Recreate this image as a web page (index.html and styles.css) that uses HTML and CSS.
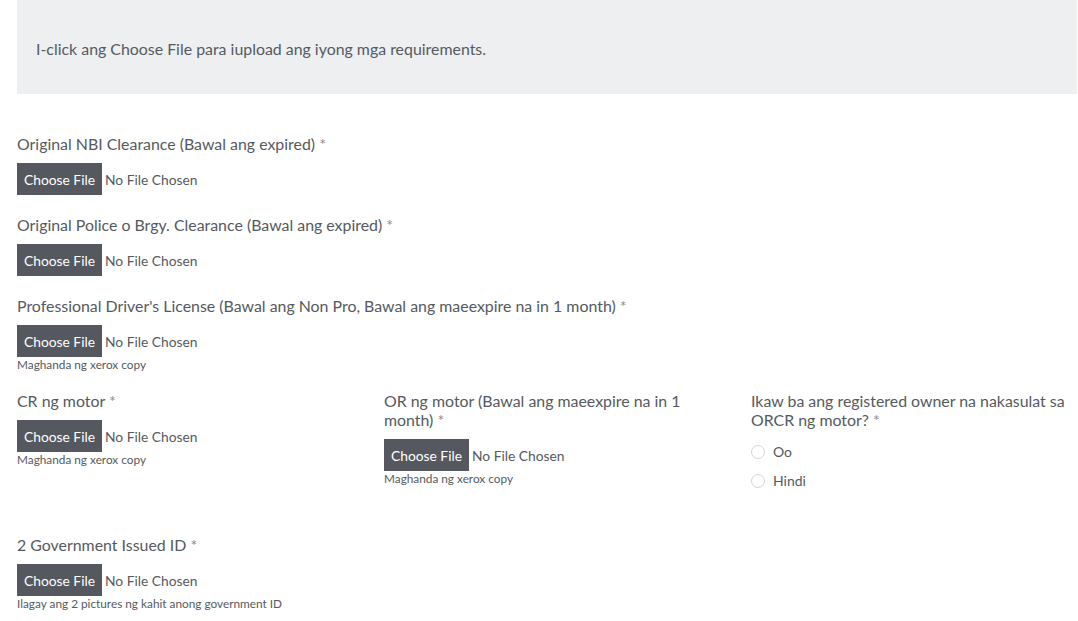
FILE: index.html
```html
<!DOCTYPE html>
<html lang="tl">
<head>
<meta charset="utf-8">
<title>Requirements</title>
<link rel="stylesheet" href="styles.css">
</head>
<body>
<div class="page">
  <div class="notice">I-click ang Choose File para iupload ang iyong mga requirements.</div>

  <div class="fields">
    <div class="field">
      <label class="label">Original NBI Clearance (Bawal ang expired) <span class="req">*</span></label>
      <div class="file"><span class="btn">Choose File</span><span class="none">No File Chosen</span></div>
    </div>

    <div class="field">
      <label class="label">Original Police o Brgy. Clearance (Bawal ang expired) <span class="req">*</span></label>
      <div class="file"><span class="btn">Choose File</span><span class="none">No File Chosen</span></div>
    </div>

    <div class="field with-help">
      <label class="label">Professional Driver's License (Bawal ang Non Pro, Bawal ang maeexpire na in 1 month) <span class="req">*</span></label>
      <div class="file"><span class="btn">Choose File</span><span class="none">No File Chosen</span></div>
      <div class="help">Maghanda ng xerox copy</div>
    </div>

    <div class="cols">
      <div class="field">
        <label class="label">CR ng motor <span class="req">*</span></label>
        <div class="file"><span class="btn">Choose File</span><span class="none">No File Chosen</span></div>
        <div class="help">Maghanda ng xerox copy</div>
      </div>
      <div class="field">
        <label class="label">OR ng motor (Bawal ang maeexpire na in 1 month) <span class="req">*</span></label>
        <div class="file"><span class="btn">Choose File</span><span class="none">No File Chosen</span></div>
        <div class="help">Maghanda ng xerox copy</div>
      </div>
      <div class="field">
        <label class="label">Ikaw ba ang registered owner na nakasulat sa ORCR ng motor? <span class="req">*</span></label>
        <div class="radios">
          <div class="radio"><span class="circle"></span><span>Oo</span></div>
          <div class="radio"><span class="circle"></span><span>Hindi</span></div>
        </div>
      </div>
    </div>

    <div class="field with-help">
      <label class="label">2 Government Issued ID <span class="req">*</span></label>
      <div class="file"><span class="btn">Choose File</span><span class="none">No File Chosen</span></div>
      <div class="help">Ilagay ang 2 pictures ng kahit anong government ID</div>
    </div>
  </div>
</div>
</body>
</html>
```

FILE: styles.css
```css
* { box-sizing: border-box; }
html, body { margin: 0; padding: 0; background: #fff; }
body {
  font-family: Lato, "Liberation Sans", sans-serif;
  color: #555a60;
}
.page {
  padding: 0 1px 0 17px;
}
.notice {
  background: #eeeff1;
  height: 94px;
  padding: 39px 19px 0 19px;
  font-size: 15.9px;
  line-height: 19px;
  color: #555a60;
}
.fields {
  padding-top: 41px;
}
.field {
  margin-bottom: 21px;
}
.field.with-help {
  margin-bottom: 19px;
}
.label {
  display: block;
  font-size: 15.9px;
  line-height: 19px;
  margin-top: -1px;
  margin-bottom: 10px;
  color: #555a60;
}
.req { color: #8a8e93; }
.file {
  display: flex;
  align-items: center;
  height: 32px;
  font-size: 13.8px;
}
.btn {
  display: flex;
  align-items: center;
  height: 32px;
  padding: 0 7px;
  background: #55595f;
  color: #fff;
}
.none {
  margin-left: 3px;
  color: #555a60;
}
.help {
  font-size: 11.8px;
  line-height: 16px;
  color: #555a60;
}
.cols {
  display: grid;
  grid-template-columns: repeat(3, 326px);
  column-gap: 41px;
  margin-bottom: 41px;
}
.cols .field { margin-bottom: 0; }
.radios {
  margin-top: -2px;
}
.radio {
  display: flex;
  align-items: center;
  height: 29px;
  font-size: 14px;
}
.circle {
  width: 14px;
  height: 14px;
  border: 1px solid #d3d5d8;
  border-radius: 50%;
  margin-right: 8px;
  background: #fff;
}
```
